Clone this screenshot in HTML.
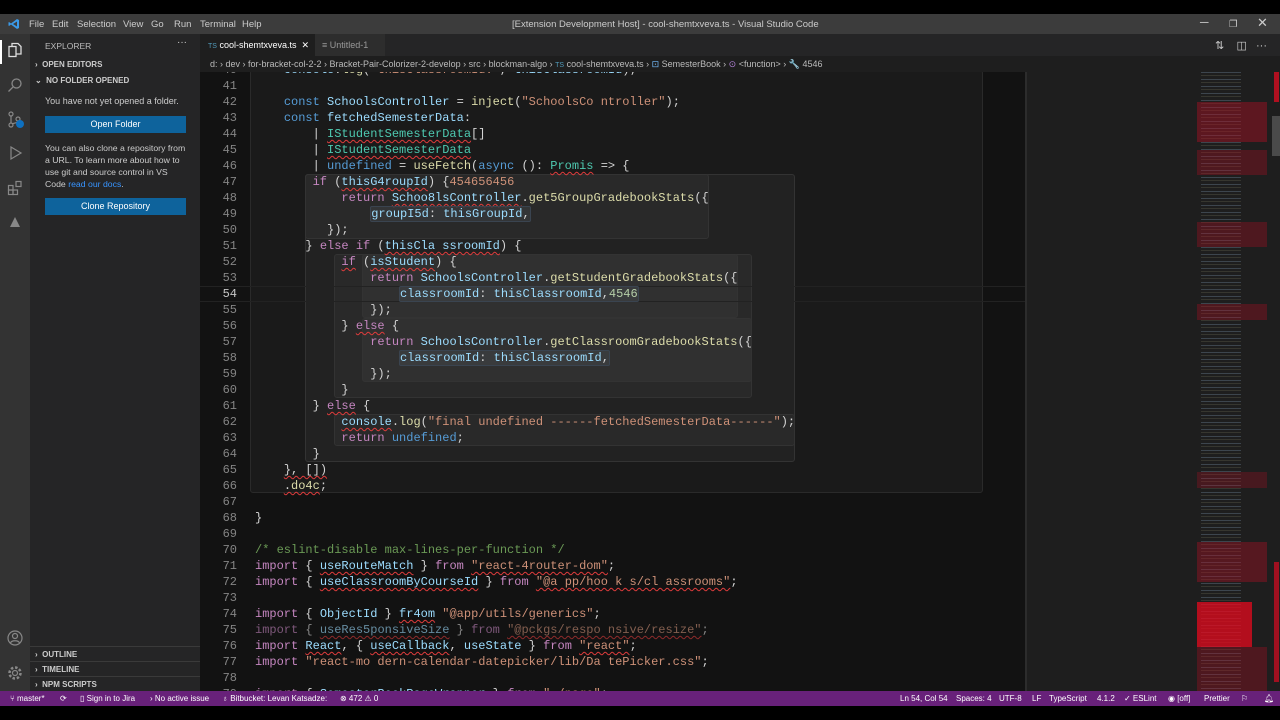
<!DOCTYPE html>
<html><head><meta charset="utf-8"><style>
*{margin:0;padding:0;box-sizing:border-box}
body{width:1280px;height:720px;background:#000;position:relative;overflow:hidden;font-family:"Liberation Sans",sans-serif;color:#ccc}
.abs{position:absolute}
#title{left:0;top:14px;width:1280px;height:20px;background:#3c3c3c;font-size:9.5px;color:#ccc}
#title span{position:absolute;top:5px}
#act{left:0;top:34px;width:30px;height:657px;background:#333}
#side{left:30px;top:34px;width:170px;height:657px;background:#252526;font-size:8.5px}
#tabs{left:200px;top:34px;width:1080px;height:22px;background:#252526}
#crumbs{left:200px;top:56px;width:1080px;height:16px;background:#1e1e1e;font-size:9px;color:#bbb}
#ed{left:200px;top:72px;width:825px;height:619px;background:#121212;overflow:hidden}
#ed2{left:1025px;top:72px;width:170px;height:619px;background:#1e1e1e;border-left:2px solid #2c2c2c}
#mm{left:1195px;top:72px;width:77px;height:619px;background:#1e1e1e;overflow:hidden}
#sb{left:1272px;top:72px;width:8px;height:619px;background:#1e1e1e}
#status{left:0;top:691px;width:1280px;height:15px;background:#68217a;color:#fff;font-size:8px}
#status span{position:absolute;top:3px}
.ln{position:absolute;left:0;width:37px;text-align:right;font-family:"Liberation Mono",monospace;font-size:12px;color:#858585;line-height:16px}
.cl{position:absolute;left:55px;font-family:"Liberation Mono",monospace;font-size:12px;line-height:16px;white-space:pre;color:#d4d4d4}
.k{color:#569cd6}.c{color:#c586c0}.v{color:#9cdcfe}.f{color:#dcdcaa}.s{color:#ce9178}.t{color:#4ec9b0}.g{color:#6a9955}
.w{text-decoration:underline wavy #e03c3c;text-decoration-thickness:1px;text-underline-offset:2px}
.box{position:absolute;border:1px solid #333;border-radius:3px;background:rgba(255,255,255,0.035)}
.hl{background:rgba(120,140,160,0.12);border:1px solid #3a4450;border-radius:2px}
.btn{position:absolute;left:15px;width:141px;height:17px;background:#0e639c;color:#fff;text-align:center;font-size:9px;line-height:17px}
.sh{position:absolute;left:5px;font-weight:bold;font-size:8px;color:#ccc}
.mr{position:absolute;left:4px;height:1px}
</style></head><body>
<div id="title" class="abs">
<svg style="position:absolute;left:8px;top:4px" width="12" height="12" viewBox="0 0 12 12"><path d="M9 1 L11 2 V10 L9 11 L3 6.5 L1 8 L0.5 7.5 V4.5 L1 4 L3 5.5 Z M9 3.5 L5 6 L9 8.5Z" fill="#3b9ae8"/></svg>
<span style="left:29px">File</span><span style="left:52px">Edit</span><span style="left:77px">Selection</span><span style="left:123px">View</span><span style="left:151px">Go</span><span style="left:174px">Run</span><span style="left:200px">Terminal</span><span style="left:242px">Help</span>
<span style="left:512px">[Extension Development Host] - cool-shemtxveva.ts - Visual Studio Code</span>
<span style="left:1200px;font-size:12px;top:1px">─</span><span style="left:1229px">❐</span><span style="left:1257px;font-size:13px;top:1px">✕</span>
</div>
<div id="act" class="abs">
<div class="abs" style="left:0;top:6px;width:2px;height:24px;background:#fff"></div>
<svg class="abs" style="left:7px;top:8px" width="16" height="16" viewBox="0 0 16 16" fill="none" stroke="#ddd" stroke-width="1.3"><path d="M5 4V1.5h6l3 3V12H9"/><rect x="2" y="4.5" width="7" height="10"/></svg>
<svg class="abs" style="left:7px;top:43px" width="16" height="16" viewBox="0 0 16 16" fill="none" stroke="#888" stroke-width="1.3"><circle cx="9.5" cy="6.5" r="4.5"/><path d="M6.3 9.7L1.5 14.5"/></svg>
<svg class="abs" style="left:7px;top:77px" width="18" height="18" viewBox="0 0 18 18" fill="none" stroke="#888" stroke-width="1.2"><circle cx="4" cy="3" r="2"/><circle cx="4" cy="14" r="2"/><circle cx="11" cy="8" r="2"/><path d="M4 5v7M11 10c0 2-4 2-6 3"/><circle cx="13" cy="13" r="4" fill="#0e70c0" stroke="none"/></svg>
<svg class="abs" style="left:7px;top:111px" width="16" height="16" viewBox="0 0 16 16" fill="none" stroke="#888" stroke-width="1.2"><path d="M4 2l10 6-10 6z"/></svg>
<svg class="abs" style="left:7px;top:146px" width="16" height="16" viewBox="0 0 16 16" fill="none" stroke="#888" stroke-width="1.2"><rect x="1.5" y="5.5" width="4.5" height="4.5"/><rect x="1.5" y="10" width="4.5" height="4.5"/><rect x="6" y="10" width="4.5" height="4.5"/><rect x="9" y="1.5" width="5" height="5"/></svg>
<svg class="abs" style="left:9px;top:182px" width="12" height="12" viewBox="0 0 12 12"><path d="M6 1L11 11H1Z" fill="#888"/></svg>
<svg class="abs" style="left:7px;top:596px" width="16" height="16" viewBox="0 0 16 16" fill="none" stroke="#888" stroke-width="1.2"><circle cx="8" cy="8" r="7"/><circle cx="8" cy="6" r="2.5"/><path d="M3.5 13c1-3 8-3 9 0"/></svg>
<svg class="abs" style="left:7px;top:631px" width="16" height="16" viewBox="0 0 16 16" fill="none" stroke="#888" stroke-width="1.2"><circle cx="8" cy="8" r="2.5"/><circle cx="8" cy="8" r="5.5" stroke-dasharray="2.5 1.8" stroke-width="2.5"/></svg>
</div>
<div id="side" class="abs">
<div class="abs" style="left:15px;top:7px;color:#bbb">EXPLORER</div><div class="abs" style="left:147px;top:3px;font-size:10px">···</div>
<div class="sh" style="top:26px">›&nbsp; OPEN EDITORS</div>
<div class="sh" style="top:42px">⌄&nbsp; NO FOLDER OPENED</div>
<div class="abs" style="left:15px;top:62px;font-size:9px">You have not yet opened a folder.</div>
<div class="btn" style="top:82px">Open Folder</div>
<div class="abs" style="left:15px;top:108px;font-size:8.7px;line-height:12px;width:142px">You can also clone a repository from a URL. To learn more about how to use git and source control in VS Code <span style="color:#3794ff">read our docs</span>.</div>
<div class="btn" style="top:164px">Clone Repository</div>
<div class="abs" style="left:0;top:612px;width:170px;border-top:1px solid #3a3a3a"></div>
<div class="sh" style="top:616px">›&nbsp; OUTLINE</div>
<div class="abs" style="left:0;top:627px;width:170px;border-top:1px solid #3a3a3a"></div>
<div class="sh" style="top:631px">›&nbsp; TIMELINE</div>
<div class="abs" style="left:0;top:642px;width:170px;border-top:1px solid #3a3a3a"></div>
<div class="sh" style="top:646px">›&nbsp; NPM SCRIPTS</div>
</div>
<div id="tabs" class="abs">
<div class="abs" style="left:0;top:0;width:115px;height:22px;background:#1e1e1e;font-size:9px;line-height:22px;color:#fff;padding-left:8px"><span style="color:#519aba;font-size:7px">TS</span> cool-shemtxveva.ts &nbsp;✕</div>
<div class="abs" style="left:115px;top:0;width:70px;height:22px;background:#2d2d2d;font-size:9px;line-height:22px;color:#999;padding-left:7px">≡ Untitled-1</div>
<div class="abs" style="left:1015px;top:5px;font-size:11px;color:#ccc">⇅&nbsp;&nbsp;&nbsp; ◫ &nbsp;&nbsp;···</div>
</div>
<div id="crumbs" class="abs"><span class="abs" style="left:10px;top:3px">d: › dev › for-bracket-col-2-2 › Bracket-Pair-Colorizer-2-develop › src › blockman-algo › <span style="color:#519aba;font-size:7px">TS</span> cool-shemtxveva.ts › <span style="color:#75beff">⊡</span> SemesterBook › <span style="color:#b180d7">⊙</span> &lt;function&gt; › 🔧 4546</span></div>

<div id="ed" class="abs">
<div class="box" style="left:50px;top:-2px;width:733px;height:423px;background:#1a1a1a;border-color:#2a2a2a"></div>
<div class="box" style="left:105px;top:102px;width:490px;height:288px"></div>
<div class="box" style="left:105px;top:102px;width:404px;height:65px"></div>
<div class="box" style="left:134px;top:182px;width:418px;height:144px"></div>
<div class="box" style="left:162px;top:182px;width:376px;height:64px"></div>
<div class="box" style="left:162px;top:246px;width:390px;height:64px"></div>
<div class="box" style="left:134px;top:342px;width:461px;height:32px"></div>
<div class="abs" style="left:0;top:214px;width:825px;height:16px;border-top:1px solid #222;border-bottom:1px solid #222"></div>
<div style="position:absolute;left:0;top:-10px">
<div class="ln" style="top:0">40</div><div class="cl" style="top:0">    <span class="v">console</span>.<span class="f">log</span>(<span class="s">"thisClassroomId:"</span>, <span class="v">thisClassroomId</span>);</div>
</div>
<div style="position:absolute;left:0;top:6px;width:825px">
<div class="ln" style="top:0">41</div>
<div class="ln" style="top:16px">42</div><div class="cl" style="top:16px">    <span class="k">const</span> <span class="v">SchoolsController</span> = <span class="f">inject</span>(<span class="s">"SchoolsCo ntroller"</span>);</div>
<div class="ln" style="top:32px">43</div><div class="cl" style="top:32px">    <span class="k">const</span> <span class="v">fetchedSemesterData</span>:</div>
<div class="ln" style="top:48px">44</div><div class="cl" style="top:48px">        | <span class="t w">IStudentSemesterData</span>[]</div>
<div class="ln" style="top:64px">45</div><div class="cl" style="top:64px">        | <span class="t w">IStudentSemesterData</span></div>
<div class="ln" style="top:80px">46</div><div class="cl" style="top:80px">        | <span class="k">undefined</span> = <span class="f">useFetch</span>(<span class="k">async</span> (): <span class="t w">Promis</span> =&gt; {</div>
<div class="ln" style="top:96px">47</div><div class="cl" style="top:96px">        <span class="c">if</span> (<span class="v w">thisG4roupId</span>) {<span class="s">454656456</span></div>
<div class="ln" style="top:112px">48</div><div class="cl" style="top:112px">            <span class="c">return</span> <span class="v w">Schoo8lsController</span>.<span class="f">get5GroupGradebookStats</span>({</div>
<div class="ln" style="top:128px">49</div><div class="cl" style="top:128px">                <span class="hl"><span class="v">groupI5d</span>: <span class="v">thisGroupId</span>,</span></div>
<div class="ln" style="top:144px">50</div><div class="cl" style="top:144px">          });</div>
<div class="ln" style="top:160px">51</div><div class="cl" style="top:160px">       } <span class="c">else if</span> (<span class="v w">thisCla ssroomId</span>) {</div>
<div class="ln" style="top:176px">52</div><div class="cl" style="top:176px">            <span class="c w">if</span> (<span class="v w">isStudent</span>) {</div>
<div class="ln" style="top:192px">53</div><div class="cl" style="top:192px">                <span class="c">return</span> <span class="v">SchoolsController</span>.<span class="f">getStudentGradebookStats</span>({</div>
<div class="ln" style="top:208px;color:#c6c6c6">54</div><div class="cl" style="top:208px">                    <span class="hl"><span class="v">classroomId</span>: <span class="v">thisClassroomId</span>,<span class="s" style="color:#b5cea8">4546</span></span></div>
<div class="ln" style="top:224px">55</div><div class="cl" style="top:224px">                });</div>
<div class="ln" style="top:240px">56</div><div class="cl" style="top:240px">            } <span class="c w">else</span> {</div>
<div class="ln" style="top:256px">57</div><div class="cl" style="top:256px">                <span class="c">return</span> <span class="v">SchoolsController</span>.<span class="f">getClassroomGradebookStats</span>({</div>
<div class="ln" style="top:272px">58</div><div class="cl" style="top:272px">                    <span class="hl"><span class="v">classroomId</span>: <span class="v">thisClassroomId</span>,</span></div>
<div class="ln" style="top:288px">59</div><div class="cl" style="top:288px">                });</div>
<div class="ln" style="top:304px">60</div><div class="cl" style="top:304px">            }</div>
<div class="ln" style="top:320px">61</div><div class="cl" style="top:320px">        } <span class="c w">else</span> {</div>
<div class="ln" style="top:336px">62</div><div class="cl" style="top:336px">            <span class="v w">console</span>.<span class="f">log</span>(<span class="s">"final undefined ------fetchedSemesterData------"</span>);</div>
<div class="ln" style="top:352px">63</div><div class="cl" style="top:352px">            <span class="c">return</span> <span class="k">undefined</span>;</div>
<div class="ln" style="top:368px">64</div><div class="cl" style="top:368px">        }</div>
<div class="ln" style="top:384px">65</div><div class="cl" style="top:384px">    <span class="w">}, [])</span></div>
<div class="ln" style="top:400px">66</div><div class="cl" style="top:400px">    <span class="w">.<span class="f">do4c</span></span>;</div>
<div class="ln" style="top:416px">67</div>
<div class="ln" style="top:432px">68</div><div class="cl" style="top:432px">}</div>
<div class="ln" style="top:448px">69</div>
<div class="ln" style="top:464px">70</div><div class="cl" style="top:464px"><span class="g">/* eslint-disable max-lines-per-function */</span></div>
<div class="ln" style="top:480px">71</div><div class="cl" style="top:480px"><span class="c">import</span> { <span class="v w">useRouteMatch</span> } <span class="c">from</span> <span class="s w">"react-4router-dom"</span>;</div>
<div class="ln" style="top:496px">72</div><div class="cl" style="top:496px"><span class="c">import</span> { <span class="v w">useClassroomByCourseId</span> } <span class="c">from</span> <span class="s w">"@a pp/hoo k s/cl assrooms"</span>;</div>
<div class="ln" style="top:512px">73</div>
<div class="ln" style="top:528px">74</div><div class="cl" style="top:528px"><span class="c">import</span> { <span class="v">ObjectId</span> } <span class="v w">fr4om</span> <span class="s">"@app/utils/generics"</span>;</div>
<div class="ln" style="top:544px">75</div><div class="cl" style="top:544px;opacity:.6"><span class="c">import</span> { <span class="v w">useRes5ponsiveSize</span> } <span class="c">from</span> <span class="s w">"@pckgs/respo nsive/resize"</span>;</div>
<div class="ln" style="top:560px">76</div><div class="cl" style="top:560px"><span class="c">import</span> <span class="v w">React</span>, { <span class="v w">useCallback</span>, <span class="v">useState</span> } <span class="c">from</span> <span class="s w">"react"</span>;</div>
<div class="ln" style="top:576px">77</div><div class="cl" style="top:576px"><span class="c">import</span> <span class="s">"react-mo dern-calendar-datepicker/lib/Da tePicker.css"</span>;</div>
<div class="ln" style="top:592px">78</div>
<div class="ln" style="top:608px">79</div><div class="cl" style="top:608px"><span class="c">import</span> { <span class="v">SemesterBookPageWrapper</span> } <span class="c">from</span> <span class="s">"./page"</span>;</div>
</div>
</div>
<div id="ed2" class="abs"></div>
<div id="mm" class="abs">
<div class="abs" style="left:6px;top:0;width:40px;height:619px;background:repeating-linear-gradient(180deg,rgba(140,170,200,.28) 0 1px,transparent 1px 3px,rgba(200,200,150,.14) 3px 4px,transparent 4px 7px)"></div>
<div class="abs" style="left:2px;top:30px;width:70px;height:40px;background:rgba(170,15,35,.45)"></div>
<div class="abs" style="left:2px;top:78px;width:70px;height:25px;background:rgba(170,15,35,.35)"></div>
<div class="abs" style="left:2px;top:150px;width:70px;height:25px;background:rgba(170,15,35,.35)"></div>
<div class="abs" style="left:2px;top:232px;width:70px;height:16px;background:rgba(170,15,35,.35)"></div>
<div class="abs" style="left:2px;top:400px;width:70px;height:16px;background:rgba(170,15,35,.3)"></div>
<div class="abs" style="left:2px;top:470px;width:70px;height:40px;background:rgba(170,15,35,.4)"></div>
<div class="abs" style="left:2px;top:530px;width:55px;height:45px;background:rgba(230,10,30,.75)"></div>
<div class="abs" style="left:2px;top:575px;width:70px;height:44px;background:rgba(170,15,35,.35)"></div>
</div>
<div id="sb" class="abs"><div class="abs" style="left:0;top:44px;width:8px;height:40px;background:#4a4a4a"></div><div class="abs" style="left:2px;top:0;width:5px;height:30px;background:#b01020"></div><div class="abs" style="left:2px;top:490px;width:5px;height:120px;background:#a01020"></div></div>
<div id="status" class="abs">
<span style="left:10px">⑂ master*</span><span style="left:60px">⟳</span><span style="left:80px">▯ Sign in to Jira</span><span style="left:150px">› No active issue</span><span style="left:222px">♁ Bitbucket: Levan Katsadze:</span><span style="left:340px">⊗ 472 ⚠ 0</span>
<span style="left:900px">Ln 54, Col 54</span><span style="left:956px">Spaces: 4</span><span style="left:999px">UTF-8</span><span style="left:1032px">LF</span><span style="left:1049px">TypeScript</span><span style="left:1097px">4.1.2</span><span style="left:1124px">✓ ESLint</span><span style="left:1168px">◉ [off]</span><span style="left:1204px">Prettier</span><span style="left:1241px">⚐</span><span style="left:1264px">🔔︎</span>
</div>
</body></html>
